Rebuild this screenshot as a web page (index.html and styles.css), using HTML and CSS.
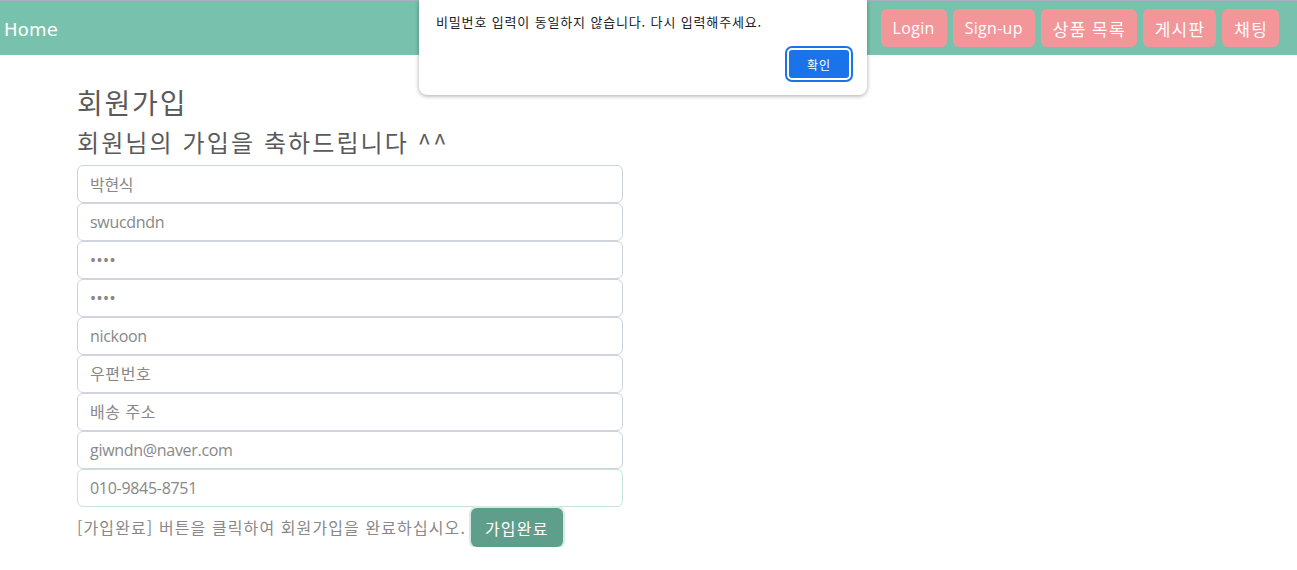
FILE: index.html
```html
<!DOCTYPE html>
<html lang="ko">
<head>
  <meta charset="UTF-8">
  <meta name="viewport" content="width=device-width, initial-scale=1.0">
  <title>회원가입</title>
  <link rel="stylesheet" href="styles.css">
</head>
<body>
  <nav class="navbar">
    <a class="brand" href="#">Home</a>
    <div class="nav-buttons">
      <button class="nav-btn">Login</button>
      <button class="nav-btn">Sign-up</button>
      <button class="nav-btn ko">상품 목록</button>
      <button class="nav-btn ko">게시판</button>
      <button class="nav-btn ko">채팅</button>
    </div>
  </nav>

  <main class="container">
    <h3 class="title">회원가입</h3>
    <h4 class="subtitle">회원님의 가입을 축하드립니다 ^^</h4>
    <form class="signup-form">
      <input class="form-control" type="text" value="박현식">
      <input class="form-control" type="text" value="swucdndn">
      <input class="form-control" type="password" value="1234">
      <input class="form-control" type="password" value="1235">
      <input class="form-control" type="text" value="nickoon">
      <input class="form-control" type="text" placeholder="우편번호">
      <input class="form-control" type="text" placeholder="배송 주소">
      <input class="form-control" type="email" value="giwndn@naver.com">
      <input class="form-control focused" type="text" value="010-9845-8751">
      <div class="submit-row">
        <span class="submit-hint">[가입완료] 버튼을 클릭하여 회원가입을 완료하십시오.</span>
        <button type="button" class="btn-submit">가입완료</button>
      </div>
    </form>
  </main>

  <div class="alert-dialog">
    <p class="alert-text">비밀번호 입력이 동일하지 않습니다. 다시 입력해주세요.</p>
    <div class="alert-actions">
      <button class="alert-ok">확인</button>
    </div>
  </div>
</body>
</html>
```

FILE: styles.css
```css
body {
  margin: 0;
  font-family: "Open Sans", "Noto Sans CJK KR", sans-serif;
  color: #888;
  font-size: 16px;
  background: #fff;
}
.navbar {
  display: flex;
  justify-content: space-between;
  align-items: center;
  height: 54px;
  padding: 0 18px 0 4px;
  background-color: #78c2ad;
  border-top: 1px solid #a9afc7;
}
.brand {
  color: #fff;
  text-decoration: none;
  font-family: "DejaVu Sans", sans-serif;
  font-size: 18px;
  letter-spacing: 0.2px;
  margin-top: 2px;
}
.nav-buttons {
  display: flex;
  gap: 6px;
}
.nav-btn {
  height: 38px;
  padding: 0 12px;
  border: none;
  border-radius: 6px;
  background-color: #f3969a;
  color: #fff;
  font-family: "Open Sans", "Noto Sans CJK KR", sans-serif;
  font-size: 16px;
  letter-spacing: 0.3px;
  cursor: pointer;
}
.nav-btn.ko {
  font-size: 17px;
  letter-spacing: 1.2px;
  padding: 0 11px 0 12px;
}
.container {
  padding: 31px 0 0 77px;
}
.title,
.subtitle {
  margin: 0 0 8px;
  color: #5a5a5a;
  font-weight: 400;
  line-height: 1.2;
  font-family: "Noto Sans CJK KR", sans-serif;
}
.title {
  font-size: 28px;
  letter-spacing: 1.8px;
}
.subtitle {
  font-size: 24px;
  letter-spacing: 2.1px;
  margin-bottom: 9px;
}
.signup-form {
  width: 546px;
  display: flex;
  flex-direction: column;
}
.form-control {
  box-sizing: border-box;
  height: 38px;
  padding: 6px 12px;
  border: 1px solid #ced4da;
  border-radius: 6px;
  font-family: "Open Sans", "Noto Sans CJK KR", sans-serif;
  font-size: 16px;
  letter-spacing: -0.3px;
  color: #888;
  background: #fff;
  outline: none;
}
.form-control::placeholder {
  color: #888;
  letter-spacing: 0.6px;
}
.form-control[type="password"] {
  letter-spacing: 0.5px;
  font-family: "Noto Sans", sans-serif;
}
.focused {
  border-color: #c7e4dc;
}
.submit-row {
  display: flex;
  align-items: center;
  gap: 5px;
  width: 700px;
  font-family: "Noto Sans CJK KR", sans-serif;
}
.submit-hint {
  letter-spacing: 1.1px;
}
.btn-submit {
  height: 39px;
  padding: 0 14px;
  margin-top: 1px;
  border: none;
  border-radius: 6px;
  background-color: #5f9e8b;
  color: #fff;
  font-family: "Noto Sans CJK KR", sans-serif;
  font-size: 16px;
  letter-spacing: 1.2px;
  box-shadow: 0 0 0 2px #d5ece5;
}
.alert-dialog {
  position: absolute;
  top: 0;
  left: 419px;
  width: 448px;
  height: 95px;
  box-sizing: border-box;
  padding: 12px 16px 0 17px;
  background: #fff;
  border-radius: 0 0 8px 8px;
  box-shadow: 0 1px 4px rgba(0, 0, 0, 0.35);
}
.alert-text {
  margin: 0;
  color: #202124;
  font-size: 13px;
  letter-spacing: 0.85px;
  font-family: "Noto Sans CJK KR", sans-serif;
}
.alert-actions {
  display: flex;
  justify-content: flex-end;
  margin-top: 17px;
}
.alert-ok {
  width: 64px;
  height: 32px;
  border: 2px solid #fff;
  border-radius: 5px;
  background: #1a73e8;
  color: #fff;
  font-size: 12px;
  letter-spacing: 1px;
  font-family: "Noto Sans CJK KR", sans-serif;
  box-shadow: 0 0 0 2px #1a73e8;
}
```
